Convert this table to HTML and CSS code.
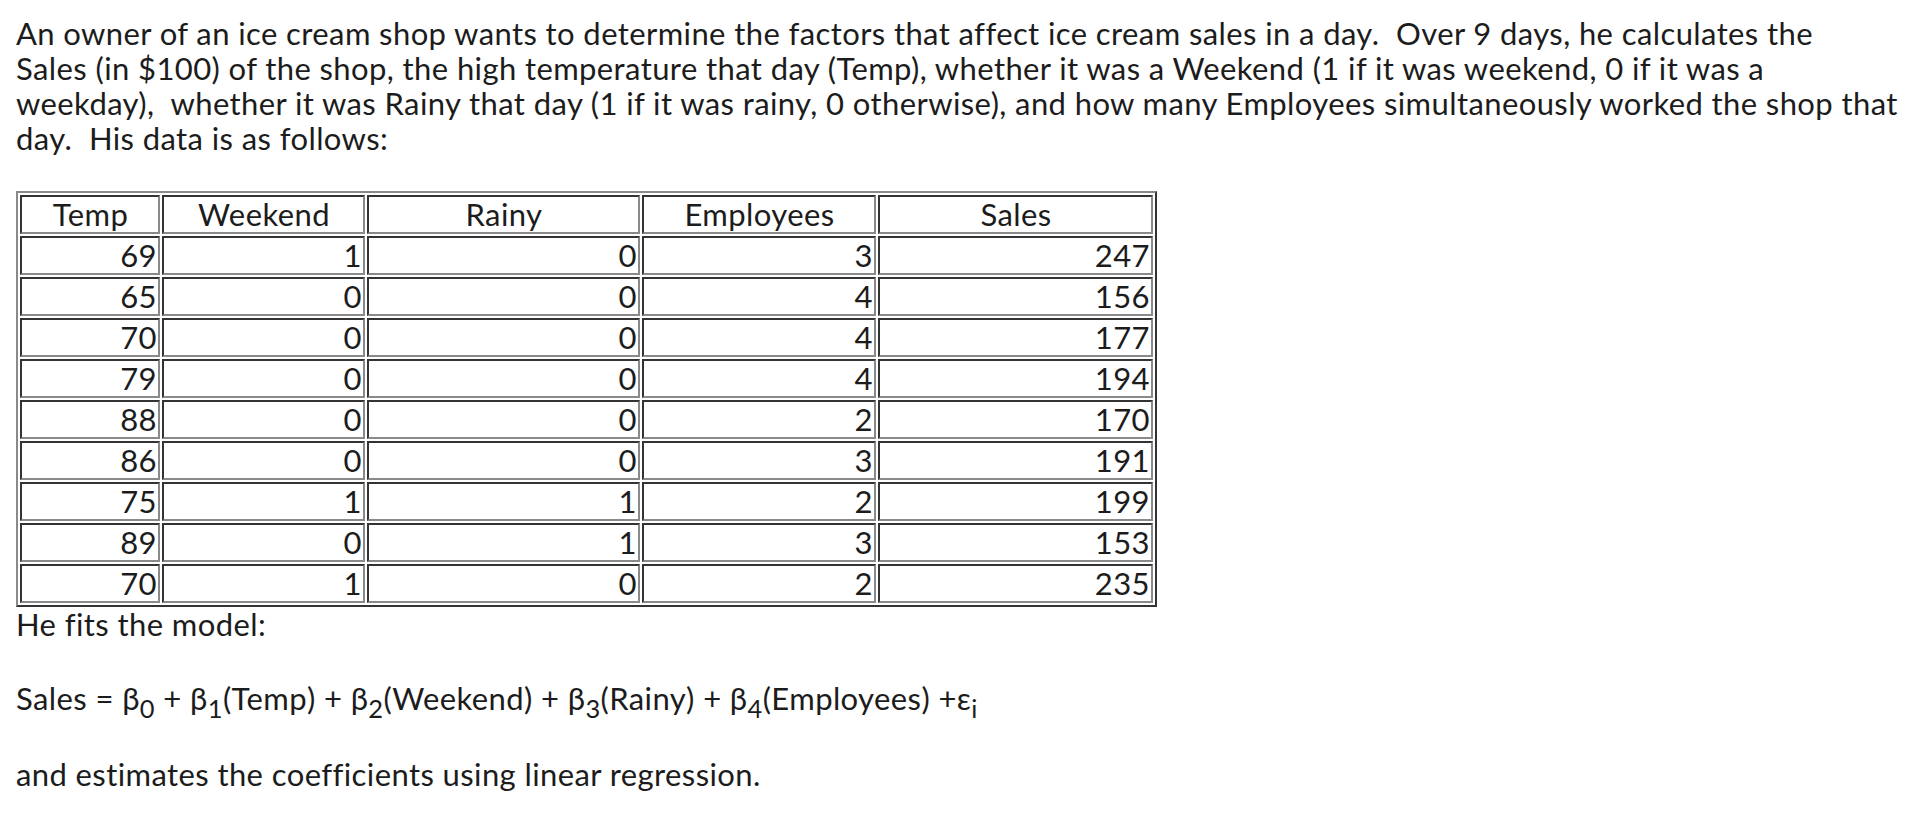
FILE: index.html
```html
<!DOCTYPE html>
<html>
<head>
<meta charset="utf-8">
<link rel="stylesheet" href="styles.css">
</head>
<body>
<div class="page">
  <p class="intro">An owner of an ice cream shop wants to determine the factors that affect ice cream sales in a day.&nbsp; Over 9 days, he calculates the<br>Sales (in $100) of the shop, the high temperature that day (Temp), whether it was a Weekend (1 if it was weekend, 0 if it was a<br>weekday),&nbsp; whether it was Rainy that day (1 if it was rainy, 0 otherwise), and how many Employees simultaneously worked the shop that<br>day.&nbsp; His data is as follows:</p>
  <div class="spacer"></div>
  <table class="data">
    <thead>
      <tr>
        <th class="c-temp">Temp</th>
        <th class="c-week">Weekend</th>
        <th class="c-rain">Rainy</th>
        <th class="c-emp">Employees</th>
        <th class="c-sales">Sales</th>
      </tr>
    </thead>
    <tbody>
      <tr><td>69</td><td>1</td><td>0</td><td>3</td><td>247</td></tr>
      <tr><td>65</td><td>0</td><td>0</td><td>4</td><td>156</td></tr>
      <tr><td>70</td><td>0</td><td>0</td><td>4</td><td>177</td></tr>
      <tr><td>79</td><td>0</td><td>0</td><td>4</td><td>194</td></tr>
      <tr><td>88</td><td>0</td><td>0</td><td>2</td><td>170</td></tr>
      <tr><td>86</td><td>0</td><td>0</td><td>3</td><td>191</td></tr>
      <tr><td>75</td><td>1</td><td>1</td><td>2</td><td>199</td></tr>
      <tr><td>89</td><td>0</td><td>1</td><td>3</td><td>153</td></tr>
      <tr><td>70</td><td>1</td><td>0</td><td>2</td><td>235</td></tr>
    </tbody>
  </table>
  <p class="line">He fits the model:</p>
  <div class="spacer"></div>
  <p class="line model">Sales = β<sub>0</sub> + β<sub>1</sub>(Temp) + β<sub>2</sub>(Weekend) + β<sub>3</sub>(Rainy) + β<sub>4</sub>(Employees) +ε<sub>i</sub></p>
  <div class="spacer"></div>
  <p class="line">and estimates the coefficients using linear regression.</p>
</div>
</body>
</html>
```

FILE: styles.css
```css
html, body {
  margin: 0;
  padding: 0;
  background: #ffffff;
}

.page {
  padding: 16px 0 0 16px;
  font-family: "Lato", "Liberation Sans", sans-serif;
  font-size: 31px;
  letter-spacing: 0.4px;
  line-height: 35px;
  color: #1c1c1c;
}

.intro, .line {
  margin: 0;
  white-space: nowrap;
}

.spacer {
  height: 35px;
}

.model {
  height: 45px;
  line-height: 42px;
}

.model sub {
  font-size: 82%;
  line-height: 0;
  vertical-align: -0.32em;
}

.data {
  border-collapse: separate;
  border-spacing: 2px;
  border: 2px solid;
  border-color: #8a8a8a #333333 #333333 #8a8a8a;
  font-size: inherit;
  line-height: 35px;
  color: inherit;
}

.data th,
.data td {
  box-sizing: border-box;
  border: 2px solid;
  border-color: #333333 #8a8a8a #8a8a8a #333333;
  padding: 0 1px 0 2px;
  font-weight: normal;
}

.data th {
  text-align: center;
}

.data td {
  text-align: right;
}

.c-temp { width: 140px; }
.c-week { width: 203px; }
.c-rain { width: 273px; }
.c-emp { width: 234px; }
.c-sales { width: 275px; }
```
